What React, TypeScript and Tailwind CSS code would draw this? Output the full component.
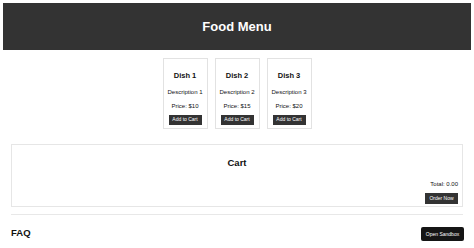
import React from "react";

const dishes = [
  { name: "Dish 1", desc: "Description 1", price: "$10" },
  { name: "Dish 2", desc: "Description 2", price: "$15" },
  { name: "Dish 3", desc: "Description 3", price: "$20" },
];

export default function App() {
  return (
    <div
      className="relative w-[474px] h-[248px] overflow-hidden bg-white text-[#111]"
      style={{ fontFamily: '"Liberation Sans", Arial, sans-serif' }}
    >
      <div className="px-[3px] pt-[3px]">
        <header className="h-[47px] bg-[#333333] flex items-center justify-center">
          <h1 className="text-[13px] font-bold text-white leading-none">Food Menu</h1>
        </header>
      </div>

      <div className="flex justify-center gap-[7px] mt-[8px]">
        {dishes.map((d) => (
          <div
            key={d.name}
            className="w-[45px] h-[71px] border border-[#e2e2e2] flex flex-col items-center pt-[13px]"
          >
            <div className="text-[7.5px] font-bold leading-none">{d.name}</div>
            <div className="text-[6px] leading-none mt-[9px] whitespace-nowrap">{d.desc}</div>
            <div className="text-[6px] leading-none mt-[8px] whitespace-nowrap">Price: {d.price}</div>
            <div className="mt-[6px] w-[33px] h-[10px] bg-[#333333] text-white text-[5px] flex items-center justify-center whitespace-nowrap leading-none">
              Add to Cart
            </div>
          </div>
        ))}
      </div>

      <div className="mx-[11px] mt-[15px] h-[63px] border border-[#e6e6e6] flex flex-col px-[4px]">
        <div className="text-[9.5px] font-bold text-center leading-none mt-[13px]">Cart</div>
        <div className="text-[6px] text-right leading-none mt-[13px]">Total: 0.00</div>
        <div className="flex justify-end mt-[6px]">
          <div className="w-[33px] h-[11px] bg-[#333333] text-white text-[5px] flex items-center justify-center leading-none whitespace-nowrap">
            Order Now
          </div>
        </div>
      </div>

      <div className="mx-[11px] mt-[7px] h-px bg-[#e8e8e8]" />

      <div className="mx-[11px] mt-[13px] text-[9.5px] font-bold leading-none">FAQ</div>

      <div className="absolute left-[421px] top-[227px] w-[43px] h-[14px] bg-[#151515] rounded-[2px] text-white text-[5px] flex items-center justify-center whitespace-nowrap leading-none">
        Open Sandbox
      </div>
    </div>
  );
}
